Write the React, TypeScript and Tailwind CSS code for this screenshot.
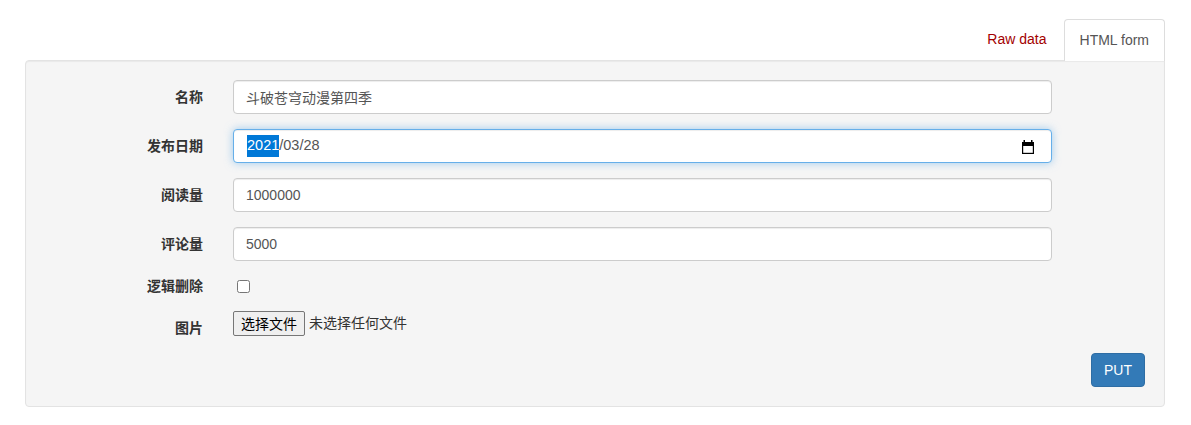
import React from 'react';

const font = { fontFamily: '"Liberation Sans", "Noto Sans CJK SC", Arial, sans-serif' };

const Label: React.FC<{ children: React.ReactNode; top?: boolean }> = ({ children, top }) => (
  <label
    className={`w-[158px] shrink-0 text-right text-[14px] font-bold leading-[20px] text-[#333] ${top ? 'pt-[7px]' : ''}`}
  >
    {children}
  </label>
);

const TextInput: React.FC<{ value: string }> = ({ value }) => (
  <input
    readOnly
    value={value}
    className="h-[34px] w-[819px] rounded-[4px] border border-[#ccc] bg-white px-[12px] text-[14px] text-[#555] shadow-[inset_0_1px_1px_rgba(0,0,0,.075)] outline-none"
    style={font}
  />
);

const CalendarIcon = () => (
  <svg width="14" height="15" viewBox="0 0 14 15" className="block">
    <rect x="2.5" y="1" width="1.5" height="3" fill="#000" />
    <rect x="10" y="1" width="1.5" height="3" fill="#000" />
    <rect x="1" y="3" width="12" height="4" fill="#000" />
    <rect x="1.6" y="3.6" width="10.8" height="10.8" fill="none" stroke="#000" strokeWidth="1.2" />
  </svg>
);

export default function App() {
  return (
    <div className="min-h-[425px] bg-white pt-[19px] pl-[25px]" style={font}>
      <div className="w-[1140px]">
        {/* tabs */}
        <ul className="relative z-10 flex justify-end">
          <li className="mr-[2px]">
            <a className="block px-[15px] py-[10px] text-[14px] leading-[20px] text-[#a30000]">Raw data</a>
          </li>
          <li className="-mb-px">
            <a className="block rounded-t-[4px] border border-b-0 border-[#ddd] bg-white px-[15px] pt-[10px] pb-[11px] text-[14px] leading-[20px] text-[#555]">
              HTML form
            </a>
          </li>
        </ul>

        {/* well */}
        <div className="rounded-[4px] rounded-tr-none border border-[#e3e3e3] bg-[#f5f5f5] p-[19px] shadow-[inset_0_1px_1px_rgba(0,0,0,.05)]">
          <div className="flex flex-col">
            <div className="mb-[15px] flex items-center gap-[30px]">
              <Label>名称</Label>
              <TextInput value="斗破苍穹动漫第四季" />
            </div>

            <div className="mb-[15px] flex items-center gap-[30px]">
              <Label>发布日期</Label>
              <div className="flex h-[34px] w-[819px] items-center rounded-[4px] border border-[#66afe9] bg-white pr-[16px] pl-[13px] text-[14.5px] text-[#555] shadow-[inset_0_1px_1px_rgba(0,0,0,.075),0_0_8px_rgba(102,175,233,.6)]">
                <span className="bg-[#0078d7] text-white">2021</span>
                <span>/03/28</span>
                <span className="ml-auto">
                  <CalendarIcon />
                </span>
              </div>
            </div>

            <div className="mb-[15px] flex items-center gap-[30px]">
              <Label>阅读量</Label>
              <TextInput value="1000000" />
            </div>

            <div className="mb-[15px] flex items-center gap-[30px]">
              <Label>评论量</Label>
              <TextInput value="5000" />
            </div>

            <div className="mb-[15px] flex h-[20px] items-center gap-[30px]">
              <Label>逻辑删除</Label>
              <input type="checkbox" className="m-0 ml-[4px] h-[13px] w-[13px]" />
            </div>

            <div className="flex h-[34px] items-start gap-[30px]">
              <Label top>图片</Label>
              <div className="flex items-center text-[14px]">
                <button className="h-[25px] rounded-[2px] border border-[#767676] bg-[#efefef] px-[7px] text-[14px] leading-[20px] text-black">
                  选择文件
                </button>
                <span className="ml-[4px] text-[#333]">未选择任何文件</span>
              </div>
            </div>

            <div className="mt-[8px] flex justify-end">
              <button className="h-[34px] rounded-[4px] border border-[#2e6da4] bg-[#337ab7] px-[12px] text-[14px] leading-[20px] text-white">
                PUT
              </button>
            </div>
          </div>
        </div>
      </div>
    </div>
  );
}
